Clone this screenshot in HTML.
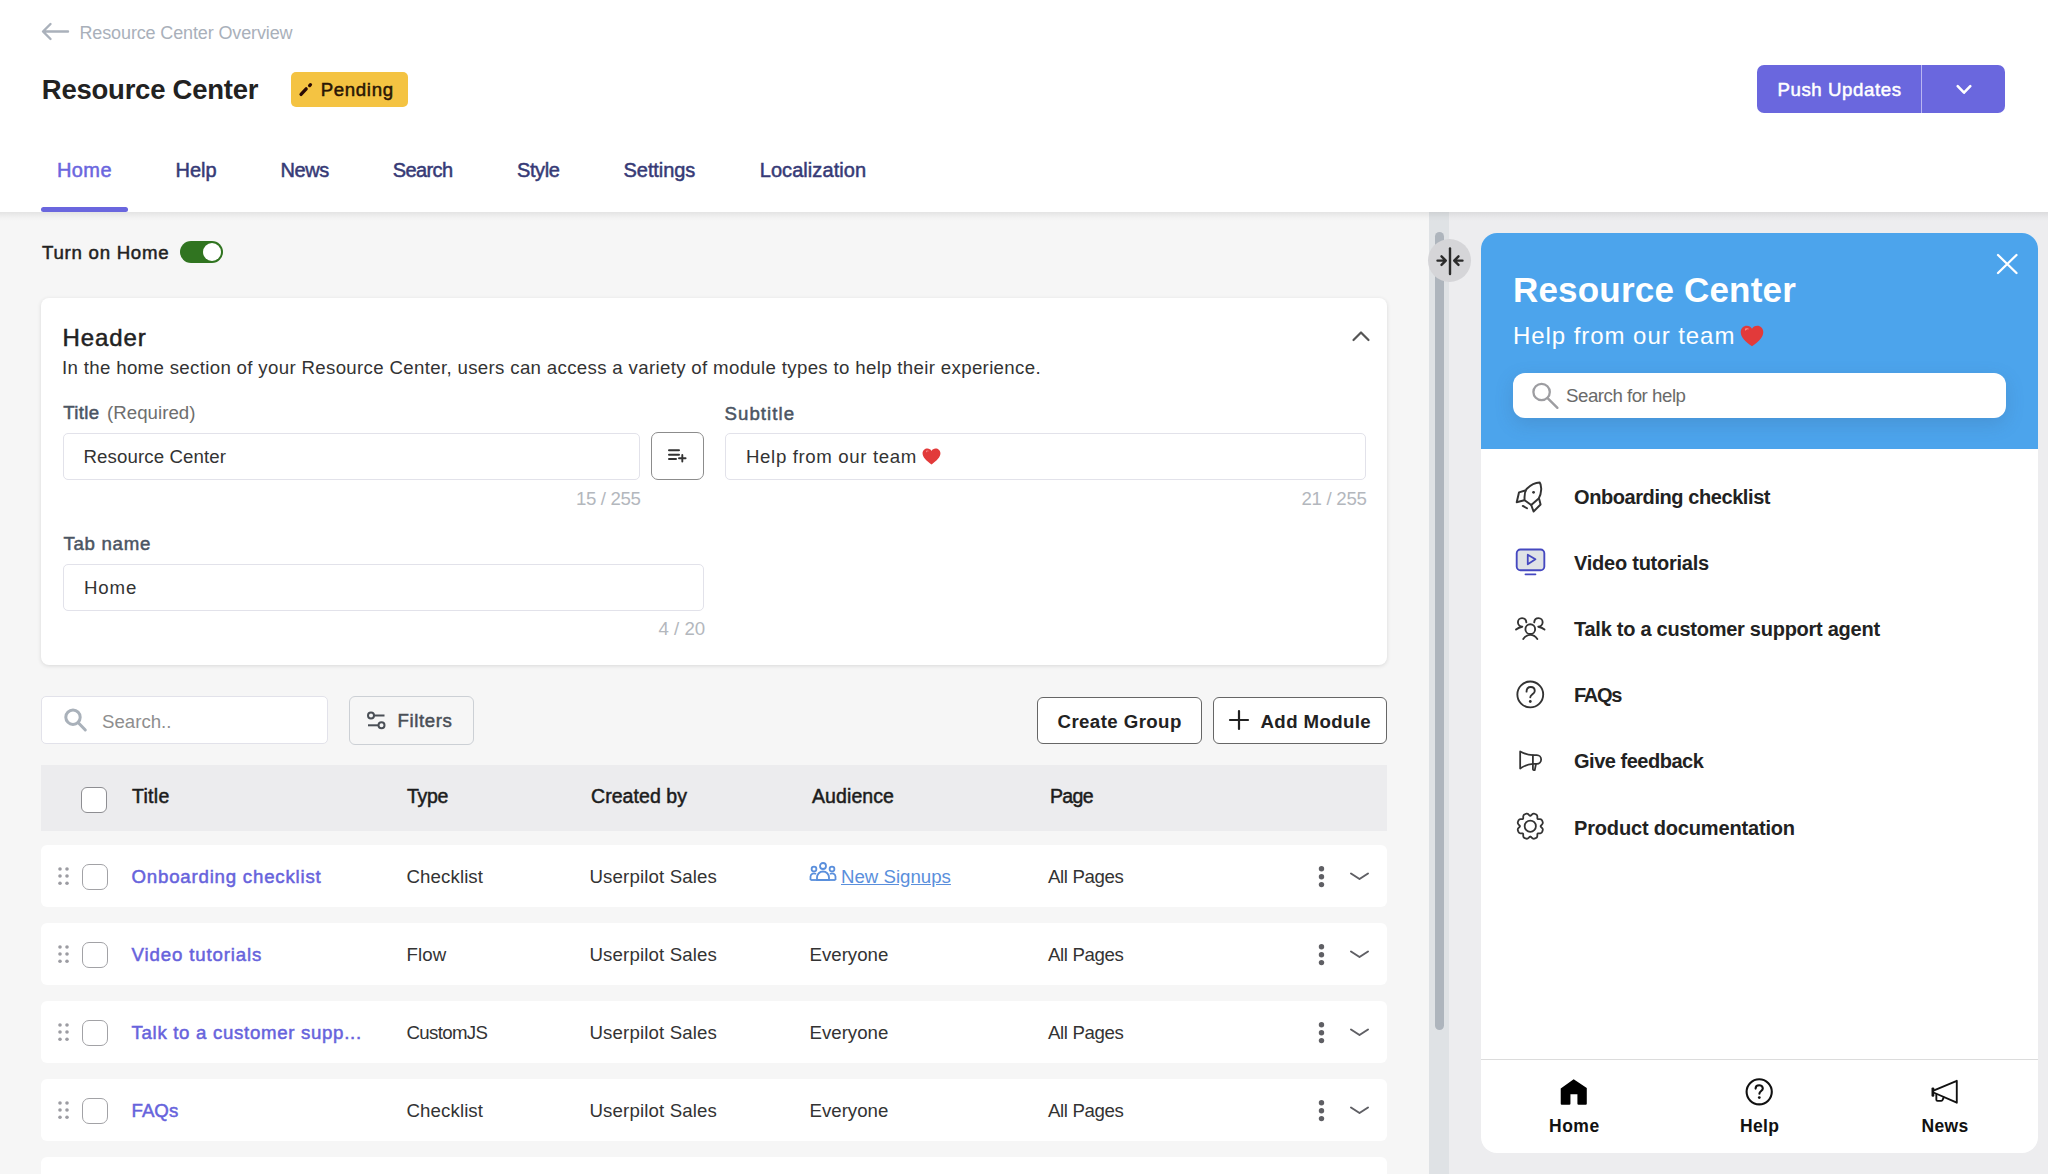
<!DOCTYPE html>
<html><head><meta charset="utf-8"><title>Resource Center</title>
<style>
html,body{margin:0;padding:0;width:2048px;height:1174px;overflow:hidden;background:#fff;font-family:"Liberation Sans",sans-serif}
.t{position:absolute;white-space:nowrap;line-height:1}
.r{position:absolute;display:block}
</style></head><body>
<div class="r" style="left:0px;top:0px;width:2048px;height:212px;background:#fff"></div>
<div class="r" style="left:0px;top:212px;width:1429px;height:962px;background:#f6f6f6"></div>
<div class="r" style="left:1449px;top:212px;width:599px;height:962px;background:#ededef"></div>
<div class="r" style="left:1429px;top:212px;width:20px;height:962px;background:#dfe2e5"></div>
<div class="r" style="left:1435px;top:232px;width:9px;height:798px;background:#aeb5bd;border-radius:5px"></div>
<div class="r" style="left:0px;top:212px;width:2048px;height:9px;background:linear-gradient(rgba(0,0,0,0.075),rgba(0,0,0,0.02) 60%,rgba(0,0,0,0))"></div>
<svg class="r" style="left:40px;top:22px;" width="30" height="20" viewBox="0 0 30 20"><path d="M28 9.5H3.5M10.5 2L3 9.5L10.5 17" fill="none" stroke="#aab1bb" stroke-width="2.4" stroke-linecap="round" stroke-linejoin="round"/></svg>
<div class="t" style="left:79.5px;top:23.5px;font-size:18px;font-weight:400;color:#a9b0ba;letter-spacing:-0.130px;">Resource Center Overview</div>
<div class="t" style="left:41.8px;top:76.3px;font-size:27.5px;font-weight:700;color:#222;letter-spacing:-0.240px;">Resource Center</div>
<div class="r" style="left:291px;top:72px;width:117px;height:35px;background:#f4c342;border-radius:5px"></div>
<svg class="r" style="left:285px;top:68px" width="45" height="42" viewBox="0 0 1258 1174" preserveAspectRatio="none"><g stroke="#2a0a05" stroke-width="92" stroke-linecap="round"><path d="M448,738 L592,583"/><path d="M688,492 L712,467"/></g></svg>
<div class="t" style="left:320.7px;top:81.3px;font-size:18.67px;font-weight:400;color:#2a1605;letter-spacing:0.650px;-webkit-text-stroke:0.5px #2a1605;">Pending</div>
<div class="r" style="left:1757px;top:65px;width:248px;height:48px;background:#6a67de;border-radius:7px"></div>
<div class="r" style="left:1921px;top:65px;width:1px;height:48px;background:#b9b6f2"></div>
<div class="t" style="left:1777.5px;top:80.8px;font-size:18.67px;font-weight:400;color:#fff;letter-spacing:0.570px;-webkit-text-stroke:0.5px #fff;">Push Updates</div>
<svg class="r" style="left:1953px;top:82px;" width="22" height="15" viewBox="0 0 22 15"><path d="M4.7 4.2L11 10.7L17.3 4.2" fill="none" stroke="#fff" stroke-width="2.6" stroke-linecap="round" stroke-linejoin="round"/></svg>
<div class="t" style="left:57.0px;top:160.3px;font-size:20px;font-weight:400;color:#6a66de;letter-spacing:0.400px;-webkit-text-stroke:0.5px #6a66de;">Home</div>
<div class="t" style="left:175.5px;top:160.3px;font-size:20px;font-weight:400;color:#363a76;letter-spacing:0.000px;-webkit-text-stroke:0.5px #363a76;">Help</div>
<div class="t" style="left:280.4px;top:160.3px;font-size:20px;font-weight:400;color:#363a76;letter-spacing:-0.370px;-webkit-text-stroke:0.5px #363a76;">News</div>
<div class="t" style="left:392.7px;top:160.3px;font-size:20px;font-weight:400;color:#363a76;letter-spacing:-0.600px;-webkit-text-stroke:0.5px #363a76;">Search</div>
<div class="t" style="left:517.0px;top:160.3px;font-size:20px;font-weight:400;color:#363a76;letter-spacing:-0.400px;-webkit-text-stroke:0.5px #363a76;">Style</div>
<div class="t" style="left:623.6px;top:160.3px;font-size:20px;font-weight:400;color:#363a76;letter-spacing:-0.080px;-webkit-text-stroke:0.5px #363a76;">Settings</div>
<div class="t" style="left:759.7px;top:160.3px;font-size:20px;font-weight:400;color:#363a76;letter-spacing:0.070px;-webkit-text-stroke:0.5px #363a76;">Localization</div>
<div class="r" style="left:41px;top:207px;width:87px;height:5px;background:#6a66de;border-radius:3px"></div>
<div class="t" style="left:42.0px;top:244.0px;font-size:18.67px;font-weight:400;color:#222;letter-spacing:0.735px;-webkit-text-stroke:0.5px #222;">Turn on Home</div>
<div class="r" style="left:180px;top:241px;width:43px;height:22px;background:#307420;border-radius:11px"></div>
<div class="r" style="left:203px;top:243px;width:18px;height:18px;background:#fff;border-radius:50%"></div>
<div class="r" style="left:41px;top:298px;width:1346px;height:367px;background:#fff;border-radius:8px;box-shadow:0 1px 4px rgba(0,0,0,0.12)"></div>
<div class="t" style="left:62.5px;top:326.1px;font-size:24px;font-weight:400;color:#222;letter-spacing:0.920px;-webkit-text-stroke:0.5px #222;">Header</div>
<svg class="r" style="left:1350px;top:328px;" width="22" height="16" viewBox="0 0 22 16"><path d="M3.5 12L11 4.5L18.5 12" fill="none" stroke="#555" stroke-width="2.2" stroke-linecap="round" stroke-linejoin="round"/></svg>
<div class="t" style="left:62.0px;top:359.4px;font-size:18.67px;font-weight:400;color:#333;letter-spacing:0.330px;">In the home section of your Resource Center, users can access a variety of module types to help their experience.</div>
<div class="t" style="left:63.3px;top:404.0px;font-size:18.67px;font-weight:400;color:#4b5563;letter-spacing:0.300px;-webkit-text-stroke:0.5px #4b5563;">Title</div>
<div class="t" style="left:107.0px;top:404.0px;font-size:18.67px;font-weight:400;color:#6e6e6e;letter-spacing:0.040px;">(Required)</div>
<div class="t" style="left:724.5px;top:404.8px;font-size:18.67px;font-weight:400;color:#4b5563;letter-spacing:1.040px;-webkit-text-stroke:0.5px #4b5563;">Subtitle</div>
<div class="r" style="left:63px;top:433px;width:577px;height:47px;background:#fff;border:1px solid #e2e2ea;border-radius:5px;box-sizing:border-box"></div>
<div class="t" style="left:83.5px;top:448.4px;font-size:18.67px;font-weight:400;color:#333;letter-spacing:0.110px;">Resource Center</div>
<div class="r" style="left:651px;top:432px;width:53px;height:48px;background:#fff;border:1.4px solid #8c8c8c;border-radius:7px;box-sizing:border-box"></div>
<svg class="r" style="left:664px;top:445px;" width="24" height="20" viewBox="0 0 24 20"><path d="M5 5.3H15M5 9.8H15M5 14H12" stroke="#333" stroke-width="2" stroke-linecap="round"/><path d="M18.3 9.9V16.5M15 13.2H21.6" stroke="#333" stroke-width="1.9" stroke-linecap="round"/></svg>
<div class="t" style="left:576.0px;top:490.2px;font-size:18.67px;font-weight:400;color:#b3b7bd;letter-spacing:-0.370px;">15 / 255</div>
<div class="r" style="left:725px;top:433px;width:641px;height:47px;background:#fff;border:1px solid #e2e2ea;border-radius:5px;box-sizing:border-box"></div>
<div class="t" style="left:746.0px;top:448.0px;font-size:18.67px;font-weight:400;color:#333;letter-spacing:0.630px;">Help from our team</div>
<div class="t" style="left:1301.5px;top:490.2px;font-size:18.67px;font-weight:400;color:#b3b7bd;letter-spacing:-0.290px;">21 / 255</div>
<div class="t" style="left:63.5px;top:534.8px;font-size:18.67px;font-weight:400;color:#4b5563;letter-spacing:0.690px;-webkit-text-stroke:0.5px #4b5563;">Tab name</div>
<div class="r" style="left:63px;top:564px;width:641px;height:47px;background:#fff;border:1px solid #e2e2ea;border-radius:5px;box-sizing:border-box"></div>
<div class="t" style="left:84.0px;top:579.2px;font-size:18.67px;font-weight:400;color:#333;letter-spacing:0.870px;">Home</div>
<div class="t" style="left:658.5px;top:620.2px;font-size:18.67px;font-weight:400;color:#b3b7bd;letter-spacing:0.000px;">4 / 20</div>
<div class="r" style="left:41px;top:696px;width:287px;height:48px;background:#fff;border:1px solid #e2e2ea;border-radius:5px;box-sizing:border-box"></div>
<svg class="r" style="left:62px;top:707px;" width="28" height="28" viewBox="0 0 28 28"><circle cx="11" cy="10.2" r="7.2" fill="none" stroke="#a9b1ba" stroke-width="3"/><path d="M16.3 15.8L23.3 23" stroke="#a9b1ba" stroke-width="3" stroke-linecap="round"/></svg>
<div class="t" style="left:102.0px;top:712.5px;font-size:18.67px;font-weight:400;color:#8e8e8e;letter-spacing:0.000px;">Search..</div>
<div class="r" style="left:349px;top:696px;width:125px;height:49px;background:#f6f6f6;border:1.3px solid #ccd0d5;border-radius:6px;box-sizing:border-box"></div>
<svg class="r" style="left:365px;top:709.5px;" width="24" height="22" viewBox="0 0 24 22"><circle cx="6" cy="5.5" r="3" fill="none" stroke="#4a4f56" stroke-width="2"/><path d="M9 5.5H19.5" stroke="#4a4f56" stroke-width="2"/><circle cx="16.5" cy="15.3" r="3" fill="none" stroke="#4a4f56" stroke-width="2"/><path d="M3 15.3H13.5" stroke="#4a4f56" stroke-width="2"/></svg>
<div class="t" style="left:397.5px;top:712.2px;font-size:18.67px;font-weight:400;color:#4a4f56;letter-spacing:0.600px;-webkit-text-stroke:0.5px #4a4f56;">Filters</div>
<div class="r" style="left:1037px;top:697px;width:165px;height:47px;background:#fff;border:1.3px solid #666;border-radius:6px;box-sizing:border-box"></div>
<div class="t" style="left:1057.5px;top:712.6px;font-size:18.67px;font-weight:700;color:#222;letter-spacing:0.420px;">Create Group</div>
<div class="r" style="left:1213px;top:697px;width:174px;height:47px;background:#fff;border:1.3px solid #666;border-radius:6px;box-sizing:border-box"></div>
<svg class="r" style="left:1228px;top:709px;" width="22" height="22" viewBox="0 0 22 22"><path d="M11 2V20M2 11H20" stroke="#222" stroke-width="2.2" stroke-linecap="round"/></svg>
<div class="t" style="left:1260.5px;top:712.6px;font-size:18.67px;font-weight:700;color:#222;letter-spacing:0.380px;">Add Module</div>
<div class="r" style="left:41px;top:765px;width:1346px;height:66px;background:#ececee"></div>
<div class="r" style="left:81px;top:787px;width:26px;height:26px;background:#fff;border:1.5px solid #8e8e92;border-radius:6px;box-sizing:border-box"></div>
<div class="t" style="left:132.0px;top:787.1px;font-size:19.5px;font-weight:400;color:#1c1c1c;letter-spacing:0.300px;-webkit-text-stroke:0.5px #1c1c1c;">Title</div>
<div class="t" style="left:407.0px;top:787.1px;font-size:19.5px;font-weight:400;color:#1c1c1c;letter-spacing:-0.270px;-webkit-text-stroke:0.5px #1c1c1c;">Type</div>
<div class="t" style="left:591.0px;top:787.1px;font-size:19.5px;font-weight:400;color:#1c1c1c;letter-spacing:0.060px;-webkit-text-stroke:0.5px #1c1c1c;">Created by</div>
<div class="t" style="left:812.0px;top:787.1px;font-size:19.5px;font-weight:400;color:#1c1c1c;letter-spacing:0.090px;-webkit-text-stroke:0.5px #1c1c1c;">Audience</div>
<div class="t" style="left:1050.0px;top:787.1px;font-size:19.5px;font-weight:400;color:#1c1c1c;letter-spacing:-0.670px;-webkit-text-stroke:0.5px #1c1c1c;">Page</div>
<div class="r" style="left:41px;top:845px;width:1346px;height:62px;background:#fff;border-radius:6px"></div>
<svg class="r" style="left:55px;top:865px;" width="16" height="22" viewBox="0 0 16 22"><circle cx="5" cy="4" r="1.8" fill="#9c9ca2"/><circle cx="5" cy="11" r="1.8" fill="#9c9ca2"/><circle cx="5" cy="18.2" r="1.8" fill="#9c9ca2"/><circle cx="12" cy="4" r="1.8" fill="#9c9ca2"/><circle cx="12" cy="11" r="1.8" fill="#9c9ca2"/><circle cx="12" cy="18.2" r="1.8" fill="#9c9ca2"/></svg>
<div class="r" style="left:82px;top:864px;width:26px;height:26px;background:#fff;border:1.8px solid #a2a2a6;border-radius:7px;box-sizing:border-box"></div>
<div class="t" style="left:131.5px;top:867.7px;font-size:18.67px;font-weight:400;color:#6763dc;letter-spacing:0.790px;-webkit-text-stroke:0.5px #6763dc;">Onboarding checklist</div>
<div class="t" style="left:406.5px;top:867.7px;font-size:18.67px;font-weight:400;color:#333;letter-spacing:0.100px;">Checklist</div>
<div class="t" style="left:589.5px;top:867.7px;font-size:18.67px;font-weight:400;color:#333;letter-spacing:0.140px;">Userpilot Sales</div>
<svg class="r" style="left:808px;top:861px;" width="30" height="22" viewBox="0 0 30 22"><g fill="none" stroke="#5a8fdc" stroke-width="1.8"><circle cx="15" cy="5" r="3"/><circle cx="6" cy="8" r="2.4"/><circle cx="24" cy="8" r="2.4"/><path d="M9 19V16.5A6 6 0 0 1 21 16.5V19Z"/><path d="M2.5 19V15.5A3.5 3.5 0 0 1 8 13M27.5 19V15.5A3.5 3.5 0 0 0 22 13"/><path d="M2.5 19H27.5"/></g></svg>
<div class="t" style="left:841.0px;top:867.7px;font-size:18.67px;font-weight:400;color:#5a8fdc;letter-spacing:0.000px;"><u>New Signups</u></div>
<div class="t" style="left:1048.0px;top:867.7px;font-size:18.67px;font-weight:400;color:#333;letter-spacing:-0.375px;">All Pages</div>
<svg class="r" style="left:1316px;top:862.5px;" width="12" height="28" viewBox="0 0 12 28"><circle cx="5.5" cy="5.8" r="2.7" fill="#5f5f64"/><circle cx="5.5" cy="13.7" r="2.7" fill="#5f5f64"/><circle cx="5.5" cy="21.6" r="2.7" fill="#5f5f64"/></svg>
<svg class="r" style="left:1348px;top:870px;" width="24" height="12" viewBox="0 0 24 12"><path d="M3 3.5L11.5 9L20 3.5" fill="none" stroke="#5f5f64" stroke-width="2" stroke-linecap="round" stroke-linejoin="round"/></svg>
<div class="r" style="left:41px;top:923px;width:1346px;height:62px;background:#fff;border-radius:6px"></div>
<svg class="r" style="left:55px;top:943px;" width="16" height="22" viewBox="0 0 16 22"><circle cx="5" cy="4" r="1.8" fill="#9c9ca2"/><circle cx="5" cy="11" r="1.8" fill="#9c9ca2"/><circle cx="5" cy="18.2" r="1.8" fill="#9c9ca2"/><circle cx="12" cy="4" r="1.8" fill="#9c9ca2"/><circle cx="12" cy="11" r="1.8" fill="#9c9ca2"/><circle cx="12" cy="18.2" r="1.8" fill="#9c9ca2"/></svg>
<div class="r" style="left:82px;top:942px;width:26px;height:26px;background:#fff;border:1.8px solid #a2a2a6;border-radius:7px;box-sizing:border-box"></div>
<div class="t" style="left:131.5px;top:945.7px;font-size:18.67px;font-weight:400;color:#6763dc;letter-spacing:0.850px;-webkit-text-stroke:0.5px #6763dc;">Video tutorials</div>
<div class="t" style="left:406.5px;top:945.7px;font-size:18.67px;font-weight:400;color:#333;letter-spacing:0.100px;">Flow</div>
<div class="t" style="left:589.5px;top:945.7px;font-size:18.67px;font-weight:400;color:#333;letter-spacing:0.140px;">Userpilot Sales</div>
<div class="t" style="left:809.5px;top:945.7px;font-size:18.67px;font-weight:400;color:#333;letter-spacing:0.000px;">Everyone</div>
<div class="t" style="left:1048.0px;top:945.7px;font-size:18.67px;font-weight:400;color:#333;letter-spacing:-0.375px;">All Pages</div>
<svg class="r" style="left:1316px;top:940.5px;" width="12" height="28" viewBox="0 0 12 28"><circle cx="5.5" cy="5.8" r="2.7" fill="#5f5f64"/><circle cx="5.5" cy="13.7" r="2.7" fill="#5f5f64"/><circle cx="5.5" cy="21.6" r="2.7" fill="#5f5f64"/></svg>
<svg class="r" style="left:1348px;top:948px;" width="24" height="12" viewBox="0 0 24 12"><path d="M3 3.5L11.5 9L20 3.5" fill="none" stroke="#5f5f64" stroke-width="2" stroke-linecap="round" stroke-linejoin="round"/></svg>
<div class="r" style="left:41px;top:1001px;width:1346px;height:62px;background:#fff;border-radius:6px"></div>
<svg class="r" style="left:55px;top:1021px;" width="16" height="22" viewBox="0 0 16 22"><circle cx="5" cy="4" r="1.8" fill="#9c9ca2"/><circle cx="5" cy="11" r="1.8" fill="#9c9ca2"/><circle cx="5" cy="18.2" r="1.8" fill="#9c9ca2"/><circle cx="12" cy="4" r="1.8" fill="#9c9ca2"/><circle cx="12" cy="11" r="1.8" fill="#9c9ca2"/><circle cx="12" cy="18.2" r="1.8" fill="#9c9ca2"/></svg>
<div class="r" style="left:82px;top:1020px;width:26px;height:26px;background:#fff;border:1.8px solid #a2a2a6;border-radius:7px;box-sizing:border-box"></div>
<div class="t" style="left:131.5px;top:1023.7px;font-size:18.67px;font-weight:400;color:#6763dc;letter-spacing:0.680px;-webkit-text-stroke:0.5px #6763dc;">Talk to a customer supp...</div>
<div class="t" style="left:406.5px;top:1023.7px;font-size:18.67px;font-weight:400;color:#333;letter-spacing:-0.660px;">CustomJS</div>
<div class="t" style="left:589.5px;top:1023.7px;font-size:18.67px;font-weight:400;color:#333;letter-spacing:0.140px;">Userpilot Sales</div>
<div class="t" style="left:809.5px;top:1023.7px;font-size:18.67px;font-weight:400;color:#333;letter-spacing:0.000px;">Everyone</div>
<div class="t" style="left:1048.0px;top:1023.7px;font-size:18.67px;font-weight:400;color:#333;letter-spacing:-0.375px;">All Pages</div>
<svg class="r" style="left:1316px;top:1018.5px;" width="12" height="28" viewBox="0 0 12 28"><circle cx="5.5" cy="5.8" r="2.7" fill="#5f5f64"/><circle cx="5.5" cy="13.7" r="2.7" fill="#5f5f64"/><circle cx="5.5" cy="21.6" r="2.7" fill="#5f5f64"/></svg>
<svg class="r" style="left:1348px;top:1026px;" width="24" height="12" viewBox="0 0 24 12"><path d="M3 3.5L11.5 9L20 3.5" fill="none" stroke="#5f5f64" stroke-width="2" stroke-linecap="round" stroke-linejoin="round"/></svg>
<div class="r" style="left:41px;top:1079px;width:1346px;height:62px;background:#fff;border-radius:6px"></div>
<svg class="r" style="left:55px;top:1099px;" width="16" height="22" viewBox="0 0 16 22"><circle cx="5" cy="4" r="1.8" fill="#9c9ca2"/><circle cx="5" cy="11" r="1.8" fill="#9c9ca2"/><circle cx="5" cy="18.2" r="1.8" fill="#9c9ca2"/><circle cx="12" cy="4" r="1.8" fill="#9c9ca2"/><circle cx="12" cy="11" r="1.8" fill="#9c9ca2"/><circle cx="12" cy="18.2" r="1.8" fill="#9c9ca2"/></svg>
<div class="r" style="left:82px;top:1098px;width:26px;height:26px;background:#fff;border:1.8px solid #a2a2a6;border-radius:7px;box-sizing:border-box"></div>
<div class="t" style="left:131.5px;top:1101.7px;font-size:18.67px;font-weight:400;color:#6763dc;letter-spacing:0.030px;-webkit-text-stroke:0.5px #6763dc;">FAQs</div>
<div class="t" style="left:406.5px;top:1101.7px;font-size:18.67px;font-weight:400;color:#333;letter-spacing:0.100px;">Checklist</div>
<div class="t" style="left:589.5px;top:1101.7px;font-size:18.67px;font-weight:400;color:#333;letter-spacing:0.140px;">Userpilot Sales</div>
<div class="t" style="left:809.5px;top:1101.7px;font-size:18.67px;font-weight:400;color:#333;letter-spacing:0.000px;">Everyone</div>
<div class="t" style="left:1048.0px;top:1101.7px;font-size:18.67px;font-weight:400;color:#333;letter-spacing:-0.375px;">All Pages</div>
<svg class="r" style="left:1316px;top:1096.5px;" width="12" height="28" viewBox="0 0 12 28"><circle cx="5.5" cy="5.8" r="2.7" fill="#5f5f64"/><circle cx="5.5" cy="13.7" r="2.7" fill="#5f5f64"/><circle cx="5.5" cy="21.6" r="2.7" fill="#5f5f64"/></svg>
<svg class="r" style="left:1348px;top:1104px;" width="24" height="12" viewBox="0 0 24 12"><path d="M3 3.5L11.5 9L20 3.5" fill="none" stroke="#5f5f64" stroke-width="2" stroke-linecap="round" stroke-linejoin="round"/></svg>
<div class="r" style="left:41px;top:1157px;width:1346px;height:62px;background:#fff;border-radius:6px"></div>
<div class="r" style="left:1428px;top:239px;width:43px;height:43px;border-radius:50%;background:#d5d5d8"></div>
<svg class="r" style="left:1434px;top:246px;" width="32" height="30" viewBox="0 0 32 30"><path d="M16 2.5V28" stroke="#2b2b2b" stroke-width="2.4" stroke-linecap="round"/><path d="M3.5 14.6H11.5M7.5 10.3L11.8 14.6L7.5 18.9" fill="none" stroke="#2b2b2b" stroke-width="2.4" stroke-linecap="round" stroke-linejoin="round"/><path d="M28.5 14.6H20.5M24.5 10.3L20.2 14.6L24.5 18.9" fill="none" stroke="#2b2b2b" stroke-width="2.4" stroke-linecap="round" stroke-linejoin="round"/></svg>
<div class="r" style="left:1481.4px;top:233.2px;width:556.3px;height:919.4px;border-radius:16px;background:#fff;overflow:hidden">
<div class="r" style="left:0;top:0;width:557px;height:216px;background:#4ca4ec"></div>
</div>
<svg class="r" style="left:1994px;top:251px;" width="26" height="26" viewBox="0 0 26 26"><path d="M4 4L22.5 22M22.5 4L4 22" stroke="#fff" stroke-width="2.3" stroke-linecap="round"/></svg>
<div class="t" style="left:1513.0px;top:272.2px;font-size:35px;font-weight:700;color:#fff;letter-spacing:0.190px;">Resource Center</div>
<div class="t" style="left:1513.0px;top:323.7px;font-size:24px;font-weight:400;color:#fff;letter-spacing:0.940px;">Help from our team</div>
<div class="r" style="left:1513px;top:373px;width:493px;height:45px;background:#fff;border-radius:12px;box-shadow:0 6px 18px rgba(60,90,130,0.22)"></div>
<div class="t" style="left:1566.0px;top:386.5px;font-size:18.67px;font-weight:400;color:#6a6a6a;letter-spacing:-0.470px;">Search for help</div>
<div class="t" style="left:1574.0px;top:486.7px;font-size:20px;font-weight:700;color:#222;letter-spacing:-0.420px;">Onboarding checklist</div>
<div class="t" style="left:1574.0px;top:552.8px;font-size:20px;font-weight:700;color:#222;letter-spacing:-0.240px;">Video tutorials</div>
<div class="t" style="left:1574.0px;top:618.6px;font-size:20px;font-weight:700;color:#222;letter-spacing:-0.260px;">Talk to a customer support agent</div>
<div class="t" style="left:1574.0px;top:685.1px;font-size:20px;font-weight:700;color:#222;letter-spacing:-1.300px;">FAQs</div>
<div class="t" style="left:1574.0px;top:750.9px;font-size:20px;font-weight:700;color:#222;letter-spacing:-0.480px;">Give feedback</div>
<div class="t" style="left:1574.0px;top:818.1px;font-size:20px;font-weight:700;color:#222;letter-spacing:-0.170px;">Product documentation</div>
<div class="r" style="left:1481px;top:1059px;width:557px;height:1px;background:#dcdcdc"></div>
<div class="t" style="left:1549.0px;top:1117.8px;font-size:17.5px;font-weight:700;color:#111;letter-spacing:0.500px;">Home</div>
<div class="t" style="left:1740.0px;top:1117.8px;font-size:17.5px;font-weight:700;color:#111;letter-spacing:0.300px;">Help</div>
<div class="t" style="left:1921.5px;top:1117.8px;font-size:17.5px;font-weight:700;color:#111;letter-spacing:0.330px;">News</div>
<svg class="r" style="left:922px;top:448px" width="19" height="17" viewBox="0 0 20 18.8" preserveAspectRatio="none"><path d="M10 18.2C4.2 14 0.6 10.2 0.6 5.9C0.6 2.9 2.9 0.6 5.7 0.6C7.6 0.6 9.1 1.6 10 3.2C10.9 1.6 12.4 0.6 14.3 0.6C17.1 0.6 19.4 2.9 19.4 5.9C19.4 10.2 15.8 14 10 18.2Z" fill="#e23a3a"/><path d="M4.2 3.2C5.5 2.4 7 2.8 7.6 3.6C6.4 3.4 5 3.8 4.2 5.2Z" fill="#ff9b9b" opacity="0.8"/></svg>
<svg class="r" style="left:1739.5px;top:325px" width="24.0" height="22" viewBox="0 0 20 18.8" preserveAspectRatio="none"><path d="M10 18.2C4.2 14 0.6 10.2 0.6 5.9C0.6 2.9 2.9 0.6 5.7 0.6C7.6 0.6 9.1 1.6 10 3.2C10.9 1.6 12.4 0.6 14.3 0.6C17.1 0.6 19.4 2.9 19.4 5.9C19.4 10.2 15.8 14 10 18.2Z" fill="#e23a3a"/><path d="M4.2 3.2C5.5 2.4 7 2.8 7.6 3.6C6.4 3.4 5 3.8 4.2 5.2Z" fill="#ff9b9b" opacity="0.8"/></svg>
<svg class="r" style="left:1505px;top:475px" width="50" height="110" viewBox="0 0 534 1174" preserveAspectRatio="none"><g fill="none" stroke="#333" stroke-linecap="round" stroke-linejoin="round" stroke-width="21"><path d="M230,150 C280,100 330,80 370,80 C395,110 392,200 360,250 L280,320 L210,270 C205,220 210,180 230,150 Z"/><path d="M215,165 L150,185 L125,290 L205,270"/><path d="M365,255 L380,315 L305,390 L280,320"/><path d="M190,330 L235,355"/></g><circle cx="305" cy="185" r="15" fill="#333"/><rect x="125" y="795" width="295" height="222" rx="40" fill="#dfe2e6" stroke="#4548c0" stroke-width="20"/><path d="M243,850 L325,900 L243,952 Z" fill="none" stroke="#4548c0" stroke-width="19" stroke-linejoin="round"/><path d="M218,1060 L326,1060" stroke="#4548c0" stroke-width="18" stroke-linecap="round"/></svg>
<svg class="r" style="left:1505px;top:605px" width="50" height="110" viewBox="0 0 534 1174" preserveAspectRatio="none"><g fill="none" stroke="#333" stroke-linecap="round" stroke-linejoin="round" stroke-width="20"><circle cx="270" cy="258" r="52"/><path d="M195,362 C235,305 305,305 345,362"/><path d="M228,185 C225,150 200,140 182,140 C155,140 138,162 138,185 C138,210 160,230 185,232 C160,236 135,248 118,262"/><path d="M312,185 C315,150 340,140 358,140 C385,140 402,162 402,185 C402,210 380,230 355,232 C380,236 405,248 422,262"/><circle cx="270" cy="955" r="138"/><path d="M230,925 C230,890 252,875 275,875 C300,875 318,893 318,917 C318,950 270,955 270,985"/></g><circle cx="270" cy="1030" r="15" fill="#333"/></svg>
<svg class="r" style="left:1505px;top:740px" width="50" height="110" viewBox="0 0 534 1174" preserveAspectRatio="none"><g fill="none" stroke="#333" stroke-linecap="round" stroke-linejoin="round" stroke-width="19"><path d="M162,122 Q228,160 298,162 L340,162 A46,46 0 0 1 340,254 L298,254 Q228,258 162,305 Z"/><path d="M298,162 L298,312 Q300,325 318,322 L330,260"/><path d="M270.0,810.0 L275.9,807.4 L282.5,800.8 L290.1,793.4 L298.0,788.1 L305.9,786.1 L313.2,787.0 L320.2,789.3 L326.9,792.1 L333.5,795.4 L339.3,800.0 L343.5,806.9 L345.4,816.3 L345.4,826.9 L345.5,836.2 L347.8,842.2 L353.8,844.5 L363.1,844.6 L373.7,844.6 L383.1,846.5 L390.0,850.7 L394.6,856.5 L397.9,863.1 L400.7,869.8 L403.0,876.8 L403.9,884.1 L401.9,892.0 L396.6,899.9 L389.2,907.5 L382.6,914.1 L380.0,920.0 L382.6,925.9 L389.2,932.5 L396.6,940.1 L401.9,948.0 L403.9,955.9 L403.0,963.2 L400.7,970.2 L397.9,976.9 L394.6,983.5 L390.0,989.3 L383.1,993.5 L373.7,995.4 L363.1,995.4 L353.8,995.5 L347.8,997.8 L345.5,1003.8 L345.4,1013.1 L345.4,1023.7 L343.5,1033.1 L339.3,1040.0 L333.5,1044.6 L326.9,1047.9 L320.2,1050.7 L313.2,1053.0 L305.9,1053.9 L298.0,1051.9 L290.1,1046.6 L282.5,1039.2 L275.9,1032.6 L270.0,1030.0 L264.1,1032.6 L257.5,1039.2 L249.9,1046.6 L242.0,1051.9 L234.1,1053.9 L226.8,1053.0 L219.8,1050.7 L213.1,1047.9 L206.5,1044.6 L200.7,1040.0 L196.5,1033.1 L194.6,1023.7 L194.6,1013.1 L194.5,1003.8 L192.2,997.8 L186.2,995.5 L176.9,995.4 L166.3,995.4 L156.9,993.5 L150.0,989.3 L145.4,983.5 L142.1,976.9 L139.3,970.2 L137.0,963.2 L136.1,955.9 L138.1,948.0 L143.4,940.1 L150.8,932.5 L157.4,925.9 L160.0,920.0 L157.4,914.1 L150.8,907.5 L143.4,899.9 L138.1,892.0 L136.1,884.1 L137.0,876.8 L139.3,869.8 L142.1,863.1 L145.4,856.5 L150.0,850.7 L156.9,846.5 L166.3,844.6 L176.9,844.6 L186.2,844.5 L192.2,842.2 L194.5,836.2 L194.6,826.9 L194.6,816.3 L196.5,806.9 L200.7,800.0 L206.5,795.4 L213.1,792.1 L219.8,789.3 L226.8,787.0 L234.1,786.1 L242.0,788.1 L249.9,793.4 L257.5,800.8 L264.1,807.4 L270.0,810.0Z"/><circle cx="270" cy="920" r="60"/></g></svg>
<svg class="r" style="left:1529px;top:380px;" width="32" height="32" viewBox="0 0 32 32"><circle cx="12.6" cy="12" r="8.2" fill="none" stroke="#9d9da1" stroke-width="2.3"/><path d="M18.6 18.2L28.4 27.8" stroke="#9d9da1" stroke-width="2.4" stroke-linecap="round"/></svg>
<svg class="r" style="left:1550px;top:1070px" width="50" height="40" viewBox="0 0 1468 1174" preserveAspectRatio="none"><path d="M695,270 L1080,530 L1080,990 Q1080,1020 1050,1020 L840,1020 Q805,1020 805,990 L805,715 L600,715 L600,990 Q600,1020 570,1020 L345,1020 Q315,1020 315,990 L315,540 Z" fill="#000"/></svg>
<svg class="r" style="left:1744px;top:1077px;" width="31" height="31" viewBox="0 0 31 31"><circle cx="15.2" cy="14.8" r="12.6" fill="none" stroke="#111" stroke-width="2.1"/><path d="M11.6 11.6C11.6 9.4 13.2 8.2 15.2 8.2C17.2 8.2 18.8 9.6 18.8 11.4C18.8 13.8 15.4 14.2 15.4 16.8" fill="none" stroke="#111" stroke-width="2.1" stroke-linecap="round"/><circle cx="15.3" cy="20.6" r="1.4" fill="#111"/></svg>
<svg class="r" style="left:1920px;top:1070px" width="50" height="40" viewBox="0 0 1468 1174" preserveAspectRatio="none"><g fill="none" stroke="#111" stroke-width="55" stroke-linejoin="round" stroke-linecap="round"><path d="M430,590 L1080,318 L1080,960 L430,675"/><path d="M480,720 L480,870 Q480,905 515,905 L625,905 Q655,905 665,875 L695,805"/></g><rect x="338" y="510" width="82" height="275" rx="35" fill="#111"/></svg>
</body></html>
